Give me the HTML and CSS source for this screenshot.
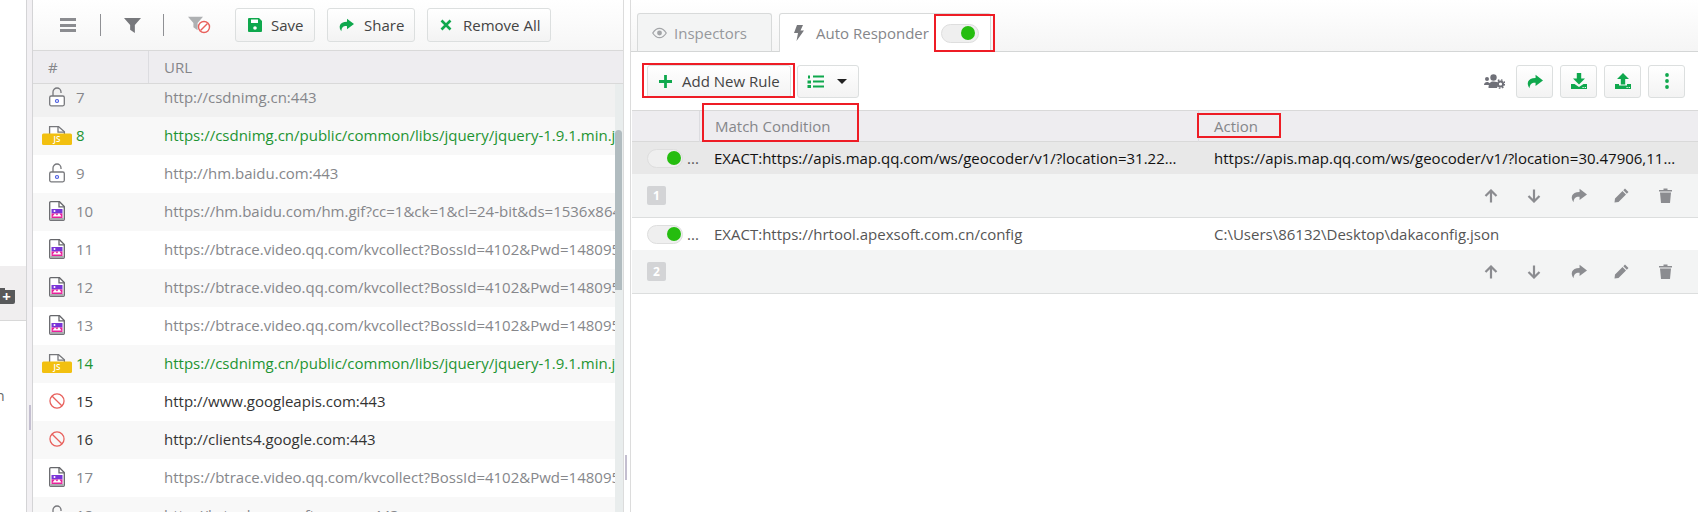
FILE: index.html
```html
<!DOCTYPE html>
<html lang="en">
<head>
<meta charset="utf-8">
<title>Auto Responder</title>
<link rel="stylesheet" href="styles.css">
</head>
<body>
<svg class="defs" width="0" height="0" aria-hidden="true">
  <symbol id="i-lock" viewBox="0 0 16 20">
    <path d="M4 9V5a4 4 0 0 1 8 0v1" fill="none" stroke="#77787c" stroke-width="1.3"/>
    <rect x="0.7" y="9" width="14.600" height="9.800" rx="1.500" fill="#fff" stroke="#77787c" stroke-width="1.300"/>
    <circle cx="8" cy="14" r="1.500" fill="none" stroke="#4a5be0" stroke-width="1.200"/>
  </symbol>
  <symbol id="i-js" viewBox="0 0 30 20">
    <path d="M7.600 11V1.700h9l5.800 5V11" fill="#fff" stroke="#77787c" stroke-width="1.300"/>
    <path d="M16 1.700v5.500h6" fill="none" stroke="#77787c" stroke-width="1.300"/>
    <rect x="0" y="8.500" width="30" height="11.500" rx="1.500" fill="#f2c010"/>
    <text x="15" y="17.400" class="js-label" text-anchor="middle">JS</text>
  </symbol>
  <symbol id="i-img" viewBox="0 0 16 20">
    <path d="M.7 1.700a1 1 0 0 1 1-1h8.800l4.800 4.800v12.800a1 1 0 0 1-1 1H1.700a1 1 0 0 1-1-1z" fill="#fff" stroke="#66676b" stroke-width="1.300"/>
    <path d="M10 .8v5h5" fill="none" stroke="#66676b" stroke-width="1.300"/>
    <rect x="2.500" y="8" width="11" height="4.500" fill="#7a35d8"/>
    <rect x="2.500" y="12.500" width="11" height="4.500" fill="#e8209a"/>
    <path d="M3.500 15.500l2.500-3 2 2 2-2.500 2.500 3.500z" fill="#fff"/>
    <circle cx="5.500" cy="10" r="1" fill="#fff"/>
    <rect x="1.300" y="17" width="13.400" height="2.200" fill="#a9a9ad"/>
  </symbol>
  <symbol id="i-block" viewBox="0 0 20 20">
    <circle cx="10" cy="10" r="8.800" fill="none" stroke="#e8605c" stroke-width="1.600"/>
    <path d="M4 4l12 12" stroke="#e8605c" stroke-width="1.600"/>
  </symbol>
  <symbol id="i-share" viewBox="0 0 24 24">
    <path d="M13.500 2.500L24 10.500l-10.500 8v-4.800C8.500 13.300 5.500 15 5 21.500 .5 15.500 1.500 7 13.500 7z"/>
  </symbol>
  <symbol id="i-funnel" viewBox="0 0 18 18">
    <path d="M0 1h18l-6.500 7.500V17l-5-3.500v-5z"/>
  </symbol>
</svg>

<div class="app">
  <aside class="sidebar">
    <div class="side-item">
      <span class="folder"><span class="folder-plus">+</span></span>
    </div>
    <div class="side-letter">n</div>
  </aside>

  <div class="splitter splitter-left"><span class="grip"></span></div>

  <section class="list-panel">
    <div class="list-toolbar">
      <span class="tb-icon tb-menu"><i></i><i></i><i></i></span>
      <span class="tb-sep"></span>
      <svg class="tb-icon tb-funnel"><use href="#i-funnel"/></svg>
      <span class="tb-sep tb-sep-2"></span>
      <svg class="tb-funnel-off" viewBox="0 0 23 18">
        <use href="#i-funnel" x="0" y="0" width="15" height="15" class="funnel-light"/>
        <circle cx="16" cy="11" r="5.500" fill="#fff" stroke="#e8605c" stroke-width="1.400"/>
        <path d="M12.500 14.500l7-7" stroke="#e8605c" stroke-width="1.400"/>
      </svg>
      <button class="btn btn-save">
        <svg class="btn-ico" viewBox="0 0 14 14"><path d="M1 0h10l3 3v10a1 1 0 0 1-1 1H1a1 1 0 0 1-1-1V1a1 1 0 0 1 1-1z" fill="#0fa84d"/><rect x="3" y="1.500" width="7" height="3.500" fill="#fff"/><circle cx="7" cy="10" r="1.800" fill="#fff"/></svg>
        Save
      </button>
      <button class="btn btn-share">
        <svg class="btn-ico btn-ico-share"><use href="#i-share"/></svg>
        Share
      </button>
      <button class="btn btn-remove">
        <svg class="btn-ico btn-ico-x" viewBox="0 0 12 12"><path d="M1.500 1.500l9 9M10.500 1.500l-9 9" stroke="#0fa84d" stroke-width="2.600"/></svg>
        Remove All
      </button>
    </div>

    <div class="list-head">
      <div class="lh-num">#</div>
      <div class="lh-url">URL</div>
    </div>

    <div class="list-body">
      <div class="rows">
        <div class="row row-first row-hover"><svg class="ico"><use href="#i-lock"/></svg><span class="num">7</span><span class="url">http://csdnimg.cn:443</span></div>
        <div class="row row-alt row-green"><svg class="ico ico-js"><use href="#i-js"/></svg><span class="num">8</span><span class="url">https://csdnimg.cn/public/common/libs/jquery/jquery-1.9.1.min.js</span></div>
        <div class="row"><svg class="ico"><use href="#i-lock"/></svg><span class="num">9</span><span class="url">http://hm.baidu.com:443</span></div>
        <div class="row row-alt"><svg class="ico"><use href="#i-img"/></svg><span class="num">10</span><span class="url">https://hm.baidu.com/hm.gif?cc=1&amp;ck=1&amp;cl=24-bit&amp;ds=1536x864&amp;vl=722</span></div>
        <div class="row"><svg class="ico"><use href="#i-img"/></svg><span class="num">11</span><span class="url">https://btrace.video.qq.com/kvcollect?BossId=4102&amp;Pwd=1480952</span></div>
        <div class="row row-alt"><svg class="ico"><use href="#i-img"/></svg><span class="num">12</span><span class="url">https://btrace.video.qq.com/kvcollect?BossId=4102&amp;Pwd=1480952</span></div>
        <div class="row"><svg class="ico"><use href="#i-img"/></svg><span class="num">13</span><span class="url">https://btrace.video.qq.com/kvcollect?BossId=4102&amp;Pwd=1480952</span></div>
        <div class="row row-alt row-green"><svg class="ico ico-js"><use href="#i-js"/></svg><span class="num">14</span><span class="url">https://csdnimg.cn/public/common/libs/jquery/jquery-1.9.1.min.js</span></div>
        <div class="row row-dark"><svg class="ico"><use href="#i-block"/></svg><span class="num">15</span><span class="url">http://www.googleapis.com:443</span></div>
        <div class="row row-alt row-dark"><svg class="ico"><use href="#i-block"/></svg><span class="num">16</span><span class="url">http://clients4.google.com:443</span></div>
        <div class="row"><svg class="ico"><use href="#i-img"/></svg><span class="num">17</span><span class="url">https://btrace.video.qq.com/kvcollect?BossId=4102&amp;Pwd=1480952</span></div>
        <div class="row row-alt"><svg class="ico"><use href="#i-lock"/></svg><span class="num">18</span><span class="url">http://hrtool.apexsoft.com.cn:443</span></div>
      </div>
      <div class="scrollbar"><div class="thumb"></div></div>
    </div>
  </section>

  <div class="splitter splitter-right"><span class="grip grip-right"></span></div>

  <main class="pane">
    <div class="tabs">
      <div class="tab tab-off">
        <svg class="tab-ico" viewBox="0 0 16 12"><path d="M.8 6C3 2.500 5.300 1 8 1s5 1.500 7.200 5C13 9.500 10.700 11 8 11S3 9.500.8 6z" fill="none" stroke="#a3a5a8" stroke-width="1.300"/><circle cx="8" cy="6" r="2.600" fill="#a3a5a8"/></svg>
        Inspectors
      </div>
      <div class="tab tab-on">
        <svg class="tab-ico tab-bolt" viewBox="0 0 10 16"><path d="M3 0h6L6.500 5.500H10L2.500 16l1.500-8H0z" fill="#77787c"/></svg>
        Auto Responder
        <span class="toggle toggle-tab"><span class="knob"></span></span>
      </div>
    </div>

    <div class="rule-toolbar">
      <button class="btn btn-add">
        <svg class="btn-ico btn-ico-plus" viewBox="0 0 14 14"><path d="M7 0v14M0 7h14" stroke="#0fa84d" stroke-width="3"/></svg>
        Add New Rule
      </button>
      <button class="btn btn-sort">
        <svg class="sort-ico" viewBox="0 0 17 13"><path d="M6 1.500h11M6 6.500h11M6 11.500h11" stroke="#0fa84d" stroke-width="1.800"/><path d="M1 .5h2v3H1zM.5 5.500h3.500v3H.5zM.5 10H4v3H.5z" fill="#0fa84d"/></svg>
        <span class="caret"></span>
      </button>
      <span class="spacer"></span>
      <svg class="people" viewBox="0 0 21 15">
        <circle cx="3" cy="5" r="2" fill="#6f7078"/>
        <path d="M0 11c0-2 1.500-3 3-3s2 .5 3 1.500V11z" fill="#6f7078"/>
        <circle cx="9.500" cy="3.500" r="3.200" fill="#6f7078"/>
        <path d="M4.500 14c0-5 2-6.500 5-6.500s4 1 4.500 3l-1 3.500z" fill="#6f7078"/>
        <circle cx="16.500" cy="10" r="2.600" fill="#fff" stroke="#6f7078" stroke-width="2"/>
        <circle cx="16.500" cy="10" r="4.200" fill="none" stroke="#6f7078" stroke-width="1.400" stroke-dasharray="1.600 1.700"/>
      </svg>
      <button class="btn btn-sq btn-sq-first"><svg class="sq-share"><use href="#i-share"/></svg></button>
      <button class="btn btn-sq">
        <svg class="sq-ico" viewBox="0 0 16 16"><path d="M5.800 0h4.400v5.500H14L8 11.500 2 5.500h3.800z" fill="#0fa84d"/><path d="M0 11h3.500L8 14l4.500-3H16v5H0z" fill="#0fa84d"/><path d="M11.500 14.500h1.200M13.700 14.500h1.200" stroke="#fff"/></svg>
      </button>
      <button class="btn btn-sq">
        <svg class="sq-ico" viewBox="0 0 16 16"><path d="M8 0l6 6h-3.800v5.500H5.800V6H2z" fill="#0fa84d"/><path d="M0 11h4v1.500h8V11h4v5H0z" fill="#0fa84d"/><path d="M11.500 14.500h1.200M13.700 14.500h1.200" stroke="#fff"/></svg>
      </button>
      <button class="btn btn-sq">
        <svg class="sq-dots" viewBox="0 0 4 16"><circle cx="2" cy="2" r="1.900" fill="#0fa84d"/><circle cx="2" cy="8" r="1.900" fill="#0fa84d"/><circle cx="2" cy="14" r="1.900" fill="#0fa84d"/></svg>
      </button>
    </div>

    <div class="rule-head">
      <div class="rh-toggle"></div>
      <div class="rh-match">Match Condition</div>
      <div class="rh-action">Action</div>
    </div>

    <div class="rule rule-selected">
      <div class="rule-main">
        <div class="rm-toggle"><span class="toggle"><span class="knob"></span></span><span class="more">...</span></div>
        <div class="rm-match">EXACT:https://apis.map.qq.com/ws/geocoder/v1/?location=31.22873,121.4489&amp;key=NQWBZ</div>
        <div class="rm-action">https://apis.map.qq.com/ws/geocoder/v1/?location=30.47906,114.40242&amp;key=NQWBZ</div>
      </div>
      <div class="rule-foot">
        <span class="badge">1</span>
        <span class="spacer"></span>
        <span class="act"><svg viewBox="0 0 14 14"><path d="M7 13.500V1.500M1.500 7L7 1.500 12.500 7" class="stroke-act"/></svg></span>
        <span class="act"><svg viewBox="0 0 14 14"><path d="M7 .5v12M1.500 7L7 12.500 12.500 7" class="stroke-act"/></svg></span>
        <span class="act"><svg class="act-share"><use href="#i-share"/></svg></span>
        <span class="act"><svg class="act-pencil" viewBox="0 0 15 15"><path d="M11 .5l3.500 3.500-1.700 1.700-3.500-3.500zM8.500 3l3.500 3.500-7.500 7.500L.5 14.500 1 10.500z" class="fill-act"/></svg></span>
        <span class="act"><svg class="act-trash" viewBox="0 0 13 15"><path d="M0 2h4.500V.5h4V2H13v1.500H0zM1 4.500h11L11 15H2z" class="fill-act"/></svg></span>
      </div>
    </div>

    <div class="rule">
      <div class="rule-main">
        <div class="rm-toggle"><span class="toggle"><span class="knob"></span></span><span class="more">...</span></div>
        <div class="rm-match">EXACT:https://hrtool.apexsoft.com.cn/config</div>
        <div class="rm-action">C:\Users\86132\Desktop\dakaconfig.json</div>
      </div>
      <div class="rule-foot">
        <span class="badge">2</span>
        <span class="spacer"></span>
        <span class="act"><svg viewBox="0 0 14 14"><path d="M7 13.500V1.500M1.500 7L7 1.500 12.500 7" class="stroke-act"/></svg></span>
        <span class="act"><svg viewBox="0 0 14 14"><path d="M7 .5v12M1.500 7L7 12.500 12.500 7" class="stroke-act"/></svg></span>
        <span class="act"><svg class="act-share"><use href="#i-share"/></svg></span>
        <span class="act"><svg class="act-pencil" viewBox="0 0 15 15"><path d="M11 .5l3.500 3.500-1.700 1.700-3.500-3.500zM8.500 3l3.500 3.500-7.500 7.500L.5 14.500 1 10.500z" class="fill-act"/></svg></span>
        <span class="act"><svg class="act-trash" viewBox="0 0 13 15"><path d="M0 2h4.500V.5h4V2H13v1.500H0zM1 4.500h11L11 15H2z" class="fill-act"/></svg></span>
      </div>
    </div>
  </main>
</div>

<div class="mark mark-toggle"></div>
<div class="mark mark-add"></div>
<div class="mark mark-match"></div>
<div class="mark mark-action"></div>
</body>
</html>
```

FILE: styles.css
```css
* { box-sizing: border-box; }
html, body { margin: 0; height: 512px; overflow: hidden; background: #fff; }
body { font-family: "Open Sans", "Noto Sans", sans-serif; font-size: 15px; color: #555; position: relative; }
.defs { position: absolute; }

.app { display: flex; height: 512px; }

/* far left strip */
.sidebar { width: 27px; flex: none; padding-top: 266px; overflow: hidden; border-right: 1px solid #d4d4d6; }
.side-item { height: 55px; background: #f0eeef; border-bottom: 1px solid #d8d8d8; display: flex; align-items: center; padding-top: 6px; }
.folder { width: 15px; height: 16px; padding-top: 2px; background: linear-gradient(to right, #58595b 5px, transparent 5px) top / 100% 2px no-repeat, linear-gradient(#58595b, #58595b) bottom / 100% 14px no-repeat; border-radius: 0 2px 2px 0; color: #fff; font-size: 15px; font-weight: 700; line-height: 13px; display: block; text-align: center; }
.folder-plus { display: block; margin-left: -2px; }
.side-letter { margin-top: 66px; margin-left: -4px; font-size: 14px; line-height: 18px; color: #666; }

/* splitters */
.splitter { flex: none; background: #f2f0f3; display: flex; flex-direction: column; align-items: center; }
.splitter-left { width: 6px; border-right: 1px solid #d4d4d6; padding-top: 405px; }
.splitter-right { width: 7px; background: #fff; border-right: 1px solid #dcdcdc; padding-top: 455px; }
.grip { width: 2px; height: 25px; background: #c4bfd0; display: block; }
.grip-right { margin-left: -2px; }

/* list */
.list-panel { width: 591px; flex: none; display: flex; flex-direction: column; height: 512px; border-right: 1px solid #dcdcdc; }
.list-toolbar { height: 51px; flex: none; display: flex; align-items: center; padding: 0 0 0 27px; background: linear-gradient(#fff, #f6f6f6); border-bottom: 1px solid #d9d9d9; }
.tb-menu { width: 16px; height: 14px; display: flex; flex-direction: column; justify-content: space-between; }
.tb-menu i { display: block; height: 3px; background: #8b8c90; }
.tb-sep { width: 1px; height: 22px; background: #8f9094; margin-left: 24px; }
.tb-funnel { width: 17px; height: 17px; fill: #77787c; margin-left: 23px; }
.tb-sep-2 { margin-left: 22px; }
.tb-funnel-off { width: 23px; height: 18px; margin-left: 24px; margin-right: 24px; }
.funnel-light { fill: #aeb0b2; }

.btn { font: inherit; color: #444; height: 34px; display: flex; align-items: center; padding: 0; border: 1px solid #dcdfdf; border-radius: 3px; background: linear-gradient(#fff, #f3f3f3); white-space: nowrap; }
.btn-save { width: 80px; padding-left: 12px; }
.btn-save .btn-ico { margin-right: 9px; }
.btn-share { width: 88px; padding-left: 10px; margin-left: 12px; }
.btn-remove { width: 124px; padding-left: 12px; margin-left: 12px; }
.btn-ico { width: 14px; height: 14px; margin-right: 10px; flex: none; }
.btn-ico-share { width: 16px; height: 16px; fill: #0fa84d; }
.btn-ico-x { width: 12px; height: 12px; margin-right: 11px; }

.list-head { height: 33px; flex: none; display: flex; background: #eeedf0; border-bottom: 1px solid #d9d9d9; color: #85868a; line-height: 32px; }
.lh-num { width: 116px; padding-left: 15px; border-right: 1px solid #dcdce0; }
.lh-url { padding-left: 15px; }

.list-body { flex: 1; min-height: 0; display: flex; overflow: hidden; }
.rows { flex: 1; min-width: 0; overflow: hidden; }
.row { height: 38px; display: flex; align-items: center; padding: 0 0 2px 16px; background: #fff; color: #86878b; white-space: nowrap; overflow: hidden; }
.row-first { margin-top: -5px; }
.row-hover { background: #f1f1f1; }
.row-alt { background: #f8f8f8; }
.row-green { color: #1e9432; }
.row-dark { color: #333; }
.ico { width: 16px; height: 20px; flex: none; }
.row > .ico:not(.ico-js) { margin-right: 11px; }
.ico-js { width: 30px; height: 20px; margin-left: -7px; margin-right: 4px; }
.js-label { font: 600 8px "Open Sans", sans-serif; fill: #fff; }
.num { width: 88px; flex: none; }
.url { flex: none; }
.scrollbar { width: 8px; flex: none; background: #e9eded; padding-top: 46px; }
.thumb { height: 160px; background: #b1bcc0; border-radius: 4px 4px 0 0; width: 7px; }

/* right pane */
.pane { flex: 1; min-width: 0; display: flex; flex-direction: column; height: 512px; }
.tabs { height: 52px; flex: none; display: flex; align-items: flex-end; padding-left: 6px; background: linear-gradient(#fff, #f5f5f5); border-bottom: 1px solid #d4d6d6; }
.tab { height: 39px; margin-bottom: -1px; border: 1px solid #d8dada; border-bottom: 0; border-radius: 3px 3px 0 0; display: flex; align-items: center; color: #85868a; white-space: nowrap; }
.tab-off { width: 135px; padding-left: 14px; background: #f3f4f4; border-bottom: 1px solid #d4d6d6; color: #96989c; }
.tab-on { width: 212px; padding-left: 14px; margin-left: 7px; background: #fff; }
.tab-ico { width: 15px; height: 12px; margin-right: 7px; flex: none; }
.tab-bolt { width: 10px; height: 16px; margin-right: 12px; }

.toggle { width: 36px; height: 19px; border-radius: 10px; border: 1px solid #dedede; background: #efefef; display: flex; justify-content: flex-end; align-items: center; padding-right: 1px; flex: none; }
.knob { width: 14px; height: 14px; border-radius: 50%; background: #25bd0f; display: block; flex: none; }
.toggle-tab { width: 38px; margin-left: 12px; padding-right: 3px; }

.rule-toolbar { height: 58px; flex: none; display: flex; align-items: center; padding: 0 13px 0 16px; background: #fff; }
.btn-add { width: 144px; height: 33px; padding-left: 11px; color: #444; }
.btn-ico-plus { width: 13px; height: 13px; margin-right: 10px; }
.btn-sort { width: 62px; height: 33px; margin-left: 6px; padding-left: 9px; }
.sort-ico { width: 17px; height: 13px; }
.caret { width: 0; height: 0; margin-left: 13px; border-left: 5px solid transparent; border-right: 5px solid transparent; border-top: 5px solid #222; }
.spacer { flex: 1; }
.people { width: 21px; height: 15px; margin-right: 11px; }
.btn-sq { width: 37px; height: 33px; justify-content: center; margin-left: 7px; }
.btn-sq-first { margin-left: 0; }
.sq-share { width: 17px; height: 17px; fill: #0fa84d; }
.sq-ico { width: 16px; height: 16px; }
.sq-dots { width: 4px; height: 16px; }

.rule-head { height: 32px; flex: none; display: grid; grid-template-columns: 67px 499px 1fr; background: #eeedf0; border-top: 1px solid #d9d9d9; border-bottom: 1px solid #d9d9d9; color: #85868a; line-height: 31px; margin-left: 1px; }
.rh-match { border-left: 1px solid #dcdce0; padding-left: 15px; }
.rh-action { border-left: 1px solid #dcdce0; padding-left: 15px; }

.rule { margin-left: 1px; }
.rule-main { height: 32px; display: grid; grid-template-columns: 67px 499px 1fr; align-items: center; background: #fff; }
.rule-selected .rule-main { background: #e8e8e8; color: #111; }
.rm-toggle { display: flex; align-items: center; padding-left: 15px; }
.more { margin-left: 4px; color: #555; line-height: 19px; }
.rm-match { padding: 0 21px 0 15px; white-space: nowrap; overflow: hidden; text-overflow: ellipsis; }
.rm-action { padding: 0 20px 0 16px; white-space: nowrap; overflow: hidden; text-overflow: ellipsis; }
.rule-foot { height: 44px; display: flex; align-items: center; padding: 0 10.500px 0 15px; background: #f3f4f4; border-bottom: 1px solid #dcdede; }
.badge { width: 19px; height: 19px; border-radius: 2px; background: #d3d4d6; color: #fff; font-size: 12px; font-weight: 700; line-height: 19px; text-align: center; display: block; }
.act { width: 43.750px; height: 16px; display: flex; justify-content: center; align-items: center; }
.act svg { width: 14px; height: 14px; }
.act .act-share { width: 17px; height: 17px; fill: #8b8c90; }
.act .act-pencil { width: 15px; height: 15px; }
.act .act-trash { width: 13px; height: 15px; }
.stroke-act { fill: none; stroke: #8b8c90; stroke-width: 2.200; }
.fill-act { fill: #8b8c90; }

/* red annotation boxes drawn over the screenshot */
.mark { position: absolute; border: 2px solid #ee1c25; pointer-events: none; }
.mark-toggle { left: 934px; top: 14px; width: 61px; height: 38px; }
.mark-add { left: 642px; top: 63px; width: 153px; height: 35px; }
.mark-match { left: 702px; top: 103px; width: 157px; height: 39px; }
.mark-action { left: 1197px; top: 113px; width: 84px; height: 25px; }
```
